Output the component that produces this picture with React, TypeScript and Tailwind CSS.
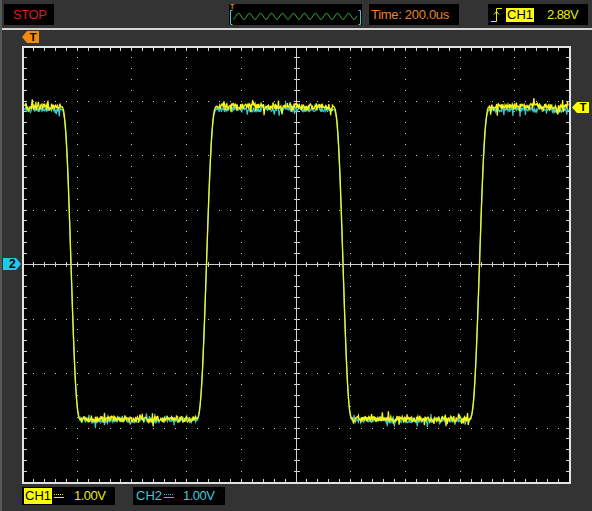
import React from "react"

// screen geometry, in page pixels
const X0 = 23
const X1 = 570
const Y0 = 47
const Y1 = 483
const DX = (X1 - X0) / 10
const DY = (Y1 - Y0) / 8
const p = (v: number) => Math.round(v)
const CX = p(X0 + 5 * DX) - 0.5
const CY = p(Y0 + 4 * DY) - 0.5

const HI = 106.5
const LO = 419
const EDGES: [number, number, boolean][] = [
  [61, 81, true],
  [196, 217, false],
  [333, 353, true],
  [469, 490, false],
]

function rng(seed: number) {
  let s = seed >>> 0
  return () => {
    s = (Math.imul(s, 1664525) + 1013904223) >>> 0
    return s / 4294967296
  }
}

const ease = (t: number) => t - Math.sin(2 * Math.PI * t) / (2 * Math.PI)

// 0 = high level, 1 = low level
function lowness(x: number) {
  let v = 0
  for (const [a, b, falling] of EDGES) {
    if (x < a) return v
    if (x < b) {
      const e = ease((x - a) / (b - a))
      return falling ? e : 1 - e
    }
    v = falling ? 1 : 0
  }
  return v
}

function tracePoints(seed: number, off: number, amp: number) {
  const r = rng(seed)
  const pts: string[] = []
  let x = X0 + 1.5
  while (x < X1 - 1) {
    const f = lowness(x)
    const flat = f === 0 || f === 1
    let y = HI + (LO - HI) * f + off * (1 - 0.6 * f)
    if (flat) {
      y += (r() - 0.5) * amp
      if (r() < 0.16) y += (r() - 0.5) * amp * 2.4
    } else {
      y += (r() - 0.5) * 1.2
    }
    pts.push(`${x.toFixed(2)},${y.toFixed(2)}`)
    x += flat ? 0.6 : 0.35
  }
  return pts.join(" ")
}

function gridDots() {
  let d = ""
  for (let i = 1; i < 10; i++) {
    if (i === 5) continue
    const x = p(X0 + i * DX) - 1
    for (let k = 1; k < 40; k++) {
      const y = p(Y0 + (k * DY) / 5) - 1
      d += `M${x} ${y}h1v1h-1z`
    }
  }
  for (let j = 1; j < 8; j++) {
    if (j === 4) continue
    const y = p(Y0 + j * DY) - 1
    for (let k = 1; k < 50; k++) {
      const x = p(X0 + (k * DX) / 5) - 1
      d += `M${x} ${y}h1v1h-1z`
    }
  }
  return d
}

function ticks() {
  let d = `M${CX} ${Y0 + 1}V${Y1 - 1}M${X0 + 1} ${CY}H${X1 - 1}`
  for (let k = 1; k < 50; k++) {
    const x = p(X0 + (k * DX) / 5) - 0.5
    d += `M${x} ${Y0 + 1}v3M${x} ${Y1 - 1}v-3M${x} ${CY - 2.5}v5`
  }
  for (let k = 1; k < 40; k++) {
    const y = p(Y0 + (k * DY) / 5) - 0.5
    d += `M${X0 + 1} ${y}h3M${X1 - 1} ${y}h-3M${CX - 3} ${y}h6`
  }
  return d
}

function Screen() {
  const cyan = tracePoints(7, 3, 5)
  const yellow = tracePoints(42, 0, 6)
  return (
    <svg width="550" height="439" viewBox="22 46 550 439" className="block shrink-0">
      <rect x={X0} y={Y0} width={X1 - X0} height={Y1 - Y0} fill="#000" stroke="#e2e2e2" strokeWidth="2" />
      <path d={gridDots()} fill="#c8c8c8" shapeRendering="crispEdges" />
      <path d={ticks()} stroke="#cfcfcf" strokeWidth="1" fill="none" shapeRendering="crispEdges" />
      <polyline points={cyan} fill="none" stroke="#3cc8cc" strokeWidth="1.2" />
      <polyline points={yellow} fill="none" stroke="#f6f61a" strokeWidth="1.3" />
    </svg>
  )
}

function MiniWave() {
  let pts = ""
  for (let x = 4; x <= 128; x += 0.5) {
    pts += `${x},${(12.3 + 3 * Math.cos((2 * Math.PI * (x - 4)) / 11)).toFixed(2)} `
  }
  return (
    <div className="relative w-[133px] h-[21px] bg-black ml-[175px]">
      <span className="absolute left-[1px] top-[-1px] text-[7px] leading-[8px] font-bold text-[#e8821e]">T</span>
      <svg width="133" height="21" viewBox="0 0 133 21" className="block">
        <path d="M3.5 6.5H1.5V20.5H3.5M129.5 6.5H131.5V20.5H129.5" stroke="#4cc8d0" fill="none" />
        <polyline points={pts} fill="none" stroke="#3cbf3c" strokeWidth="1" />
      </svg>
    </div>
  )
}

function Coupling({ color }: { color: string }) {
  return (
    <svg width="10" height="6" viewBox="0 0 10 6" className="block shrink-0">
      <path d="M0 1.5h10" stroke={color} strokeDasharray="1 1" />
      <path d="M0 4.5h10" stroke={color} />
    </svg>
  )
}

export default function App() {
  return (
    <div className="w-[592px] h-[511px] overflow-hidden bg-[#333333] border-l-2 border-[#575757] flex flex-col font-['Liberation_Sans',Arial,sans-serif]">
      {/* top status bar */}
      <div className="h-[28px] shrink-0 flex items-start pt-[4px] pl-[2px]">
        <div className="w-[50px] h-[21px] bg-black flex items-center pl-[9px] text-[13px] tracking-[-0.4px] text-[#d81c1c]">
          STOP
        </div>
        <MiniWave />
        <div className="w-[90px] h-[21px] bg-black ml-[7px] flex items-center pl-[2px] text-[13px] tracking-[-0.3px] text-[#e8822e]">
          Time: 200.0us
        </div>
        <div className="w-[100px] h-[21px] bg-black ml-[29px] flex items-center pl-[3px] text-[13px]">
          <svg width="11" height="16" viewBox="0 0 11 16" className="block shrink-0">
            <path d="M0 14.5H5.5V1.5H11M3 7.5L5.5 4.5L8 7.5" stroke="#f0f000" fill="none" />
          </svg>
          <span className="ml-[4px] h-[14px] leading-[14px] px-[1px] bg-[#ffff00] text-black">CH1</span>
          <span className="ml-[13px] tracking-[-0.6px] text-[#e8e81c]">2.88V</span>
        </div>
      </div>
      <div className="h-[2px] shrink-0 bg-[#d6d6d6]" />

      {/* horizontal trigger position marker */}
      <div className="h-[16px] shrink-0 pl-[20px] pt-[1px]">
        <div className="w-[17px] h-[12px] bg-[#f28a10] [clip-path:polygon(0_50%,5px_0,100%_0,100%_100%,5px_100%)] flex items-center justify-center pl-[5px] text-[11px] font-bold leading-none text-black">
          T
        </div>
      </div>

      {/* screen with level markers */}
      <div className="h-[439px] shrink-0 flex">
        <div className="relative w-[20px] shrink-0">
          <div className="absolute left-[1px] top-[212px] w-[18px] h-[12px] bg-[#22c8ec] [clip-path:polygon(0_0,13px_0,100%_50%,13px_100%,0_100%)] flex items-center pl-[6px] text-[12px] font-bold leading-none text-black">
            2
          </div>
        </div>
        <Screen />
        <div className="relative w-[20px] shrink-0">
          <div className="absolute left-0 top-[56px] w-[17px] h-[11px] bg-[#ffff00] [clip-path:polygon(0_50%,5px_0,100%_0,100%_100%,5px_100%)] flex items-center justify-center pl-[5px] text-[11px] font-bold leading-none text-black">
            T
          </div>
        </div>
      </div>

      {/* channel settings */}
      <div className="flex pt-[2px] pl-[20px] text-[13px]">
        <div className="w-[93px] h-[18px] bg-black flex items-center pl-[2px]">
          <span className="h-[16px] leading-[16px] px-[1px] bg-[#ffff00] text-black">CH1</span>
          <div className="ml-[2px]">
            <Coupling color="#e8e81c" />
          </div>
          <span className="ml-[10px] tracking-[-0.5px] text-[#e8e81c]">1.00V</span>
        </div>
        <div className="w-[92px] h-[18px] bg-black ml-[18px] flex items-center pl-[3px]">
          <span className="text-[#3cc8dc]">CH2</span>
          <div className="ml-[2px]">
            <Coupling color="#3cc8dc" />
          </div>
          <span className="ml-[9px] tracking-[-0.5px] text-[#3cc8dc]">1.00V</span>
        </div>
      </div>
    </div>
  )
}
